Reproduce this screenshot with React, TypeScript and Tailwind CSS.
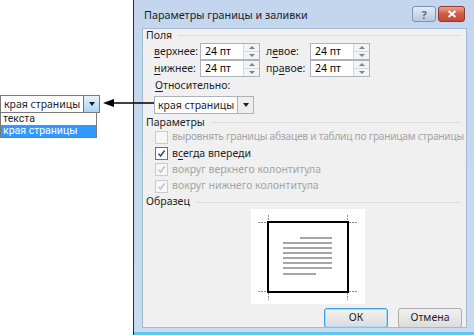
import React from 'react';

const font = { fontFamily: '"Noto Sans", "Open Sans", sans-serif' };
const listFont = { fontFamily: 'Roboto, "Noto Sans", sans-serif' };

function U({ children }: { children: React.ReactNode }) {
  return <span className="underline underline-offset-2">{children}</span>;
}

function Spin({ value }: { value: string }) {
  return (
    <div className="flex h-[17px] w-[60px] shrink-0 border border-[#acb3bd] bg-white">
      <div className="flex-1 pl-[4px] leading-[15px]">{value}</div>
      <div className="flex w-[16px] flex-col border-l border-[#d5d9de] bg-[#f3f3f3]">
        <div className="flex flex-1 items-center justify-center border-b border-[#d5d9de]">
          <div className="h-0 w-0 border-x-[3px] border-b-[3px] border-x-transparent border-b-[#7a8390]" />
        </div>
        <div className="flex flex-1 items-center justify-center">
          <div className="h-0 w-0 border-x-[3px] border-t-[3px] border-x-transparent border-t-[#7a8390]" />
        </div>
      </div>
    </div>
  );
}

function Check({ checked, disabled, children }: { checked?: boolean; disabled?: boolean; children: React.ReactNode }) {
  return (
    <div className="flex h-[16.4px] items-center gap-[4px] pl-[9px]">
      <div
        className={`flex h-[13px] w-[13px] shrink-0 items-center justify-center border ${
          disabled ? 'border-[#c8ccd2] bg-[#f7f7f7]' : 'border-[#707070] bg-white'
        }`}
      >
        {checked && (
          <svg width="9" height="9" viewBox="0 0 9 9">
            <path
              d="M1.5 4.8 L3.6 7 L7.6 1.6"
              fill="none"
              stroke={disabled ? '#bfc4ca' : '#2b4f8c'}
              strokeWidth="1.6"
            />
          </svg>
        )}
      </div>
      <span className={disabled ? 'text-[#a4a4a4]' : 'text-[#1e1e1e]'}>{children}</span>
    </div>
  );
}

function Group({ title }: { title: string }) {
  return (
    <div className="flex h-[13px] items-center gap-[6px]">
      <span className="text-[#1e1e1e]">{title}</span>
      <div className="mr-[5px] h-px flex-1 bg-[#dcdcdc]" />
    </div>
  );
}

function Preview() {
  const lines = [
    [49, 81, 29],
    [32, 81, 34],
    [32, 81, 39],
    [32, 81, 44],
    [32, 81, 49],
    [32, 81, 54],
    [32, 81, 59],
    [32, 65, 65],
  ];
  return (
    <svg width="114" height="95" viewBox="0 0 114 95" className="shrink-0 bg-white">
      <g stroke="#8c8c8c" strokeWidth="1" strokeDasharray="2 1">
        <path d="M7 13.5 H16 M17.5 6 V12" />
        <path d="M98 13.5 H107 M96.5 6 V12" />
        <path d="M7 82.5 H16 M17.5 84 V91" />
        <path d="M98 82.5 H107 M96.5 84 V91" />
      </g>
      <rect x="17" y="13" width="80" height="70" fill="white" stroke="#000" strokeWidth="2" />
      {lines.map(([x1, x2, y], i) => (
        <line key={i} x1={x1} x2={x2} y1={y} y2={y} stroke="#a6a6a6" strokeWidth="2" />
      ))}
    </svg>
  );
}

export default function App() {
  return (
    <div
      className="relative flex h-[335px] w-[474px] overflow-hidden whitespace-nowrap bg-white text-[10.5px]"
      style={font}
    >
      {/* callout: opened list */}
      <div className="w-[133px] shrink-0 pt-[95px]">
        <div className="flex h-[18px] w-[100px] border border-[#7a7a7a] bg-white">
          <span className="flex-1 pl-[3px] leading-[16px] text-[#1e1e1e]">края страницы</span>
          <div className="flex w-[16px] items-center justify-center border-l border-[#3c7fb1] bg-gradient-to-b from-[#e5f3fb] to-[#a9d5f3]">
            <div className="h-0 w-0 border-x-[3.5px] border-t-[4px] border-x-transparent border-t-[#1e1e1e]" />
          </div>
        </div>
        <div className="w-[97px] border border-t-0 border-[#7a7a7a] bg-white text-[10.5px]" style={listFont}>
          <div className="h-[12px] pl-[2px] leading-[12px] text-[#1e1e1e]">текста</div>
          <div className="h-[12px] bg-[#3399ff] pl-[2px] leading-[12px] text-white">края страницы</div>
        </div>
      </div>

      {/* arrow */}
      <svg className="absolute left-[102px] top-[98px]" width="54" height="10" viewBox="0 0 54 10">
        <path d="M10 5 H52" stroke="#000" strokeWidth="1.3" />
        <path d="M1 5 L12 1 L12 9 Z" fill="#000" />
      </svg>

      {/* dialog window */}
      <div className="flex h-[335px] w-[341px] shrink-0 flex-col border-l border-[#2c2c2c] bg-gradient-to-b from-[#c3d6ee] to-[#c9dbef]">
        <div className="flex h-[28px] items-center pl-[10px] pr-[9px] pt-[2px]">
          <span className="flex-1 text-[10.8px] text-[#1e1e1e]">Параметры границы и заливки</span>
          <div className="mb-[2px] flex gap-[2px]">
            <div className="flex h-[16px] w-[24px] items-center justify-center rounded-[3px] border border-[#7c95b5] bg-gradient-to-b from-[#e3ebf5] to-[#b7c9df] text-[11px] font-bold leading-none text-[#5a6d88]">
              ?
            </div>
            <div className="flex h-[16px] w-[27px] items-center justify-center rounded-[3px] border border-[#8c3a2c] bg-gradient-to-b from-[#e8a493] via-[#cf5b45] to-[#c44a35]">
              <svg width="10" height="8" viewBox="0 0 10 8">
                <path d="M1.5 1 L8.5 7 M8.5 1 L1.5 7" stroke="#fff" strokeWidth="2" />
              </svg>
            </div>
          </div>
        </div>

        <div className="ml-[8px] mr-[7px] h-[300px] overflow-hidden border border-[#a6b9d2] bg-[#f0f0f0] pl-[3px]">
          <Group title="Поля" />
          <div className="mt-[1px] flex h-[17px] items-center">
            <span className="w-[54px] shrink-0 pl-[8px] text-[#1e1e1e]">
              <U>в</U>ерхнее:
            </span>
            <Spin value="24 пт" />
            <span className="w-[50px] shrink-0 pl-[6px] text-[#1e1e1e]">
              л<U>е</U>вое:
            </span>
            <Spin value="24 пт" />
          </div>
          <div className="flex h-[17px] items-center">
            <span className="w-[54px] shrink-0 pl-[8px] text-[#1e1e1e]">
              <U>н</U>ижнее:
            </span>
            <Spin value="24 пт" />
            <span className="w-[50px] shrink-0 pl-[6px] text-[#1e1e1e]">
              пр<U>а</U>вое:
            </span>
            <Spin value="24 пт" />
          </div>
          <div className="mt-[2px] flex h-[14px] items-center pl-[9px] text-[#1e1e1e]">
            <U>О</U>тносительно:
          </div>
          <div className="ml-[8px] mt-[3px] flex h-[18px] w-[100px] border border-[#acb3bd] bg-white">
            <span className="flex-1 pl-[3px] leading-[16px] text-[#1e1e1e]">края страницы</span>
            <div className="flex w-[16px] items-center justify-center border-l border-[#acb3bd] bg-[#eeeeee]">
              <div className="h-0 w-0 border-x-[3.5px] border-t-[4px] border-x-transparent border-t-[#1e1e1e]" />
            </div>
          </div>
          <div className="mt-[2px]">
            <Group title="Параметры" />
          </div>
          <div>
            <Check disabled>
              <span className="text-[10.2px] tracking-[-0.25px]">
                выровнять границы абзацев и таблиц по границам страницы
              </span>
            </Check>
            <Check checked>
              в<U>с</U>егда впереди
            </Check>
            <Check checked disabled>
              вокруг верхнего колонтитула
            </Check>
            <Check checked disabled>
              вокруг нижнего колонтитула
            </Check>
          </div>
          <div className="mt-[1px]">
            <Group title="Образец" />
          </div>
          <div className="flex pl-[105px]">
            <Preview />
          </div>
          <div className="mt-[4px] flex justify-end gap-[10px] pr-[4px]">
            <div className="flex h-[20px] w-[64px] items-center justify-center rounded-[3px] border border-[#3c9ee0] bg-gradient-to-b from-[#f2f2f2] to-[#dcdcdc] text-[#1e1e1e] shadow-[inset_0_0_0_1px_#a9dbf6]">
              ОК
            </div>
            <div className="flex h-[20px] w-[64px] items-center justify-center rounded-[3px] border border-[#acacac] bg-gradient-to-b from-[#f2f2f2] to-[#dcdcdc] text-[#1e1e1e]">
              Отмена
            </div>
          </div>
        </div>
        <div className="mt-auto h-[3px] bg-[#5ec6ee]" />
      </div>
    </div>
  );
}
